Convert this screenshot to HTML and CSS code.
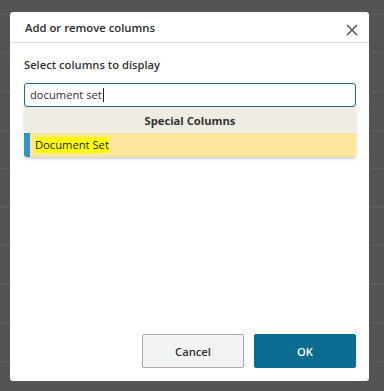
FILE: index.html
```html
<!DOCTYPE html>
<html>
<head>
<meta charset="utf-8">
<link rel="stylesheet" href="styles.css">
</head>
<body>
<div class="dialog">
  <div class="dialog-header">
    <span class="dialog-title">Add or remove columns</span>
    <span class="close">
      <svg width="12" height="12" viewBox="0 0 12 12"><path d="M1 1 L11 11 M11 1 L1 11" stroke="#5a5a5a" stroke-width="1.6" fill="none"/></svg>
    </span>
  </div>
  <div class="dialog-body">
    <div class="label">Select columns to display</div>
    <div class="input">document set<span class="caret"></span></div>
    <div class="dropdown">
      <div class="group">Special Columns</div>
      <div class="option"><span class="mark">Document Set</span></div>
    </div>
  </div>
  <div class="dialog-footer">
    <button class="btn btn-cancel">Cancel</button>
    <button class="btn btn-ok">OK</button>
  </div>
</div>
</body>
</html>
```
FILE: styles.css
```css
html, body {
  margin: 0;
  padding: 0;
}
body {
  width: 384px;
  height: 391px;
  overflow: hidden;
  background-color: #535553;
  background-image: repeating-linear-gradient(to bottom, transparent 0, transparent 14px, #5c5e5c 14px, #5c5e5c 15px, transparent 15px, transparent 38.5px);
  font-family: "Open Sans", "Noto Sans", sans-serif;
  color: #333;
  padding-top: 12px;
  box-sizing: border-box;
}
.dialog {
  margin-left: 10px;
  width: 359px;
  height: 369px;
  background: #fff;
  border-radius: 3px;
  display: flex;
  flex-direction: column;
  box-sizing: border-box;
}
.dialog-header {
  height: 31px;
  border-bottom: 1px solid #dcdcdc;
  display: flex;
  align-items: center;
  justify-content: space-between;
  padding: 0 11px 0 15px;
  box-sizing: border-box;
}
.dialog-title {
  font-size: 11.3px;
  font-weight: 600;
  color: #2b2b2b;
  margin-top: 1px;
}
.close {
  display: flex;
  margin-top: 5px;
}
.dialog-body {
  flex: 1;
  padding: 14px 13px 0 14px;
}
.label {
  font-size: 11.2px;
  font-weight: 600;
  line-height: 16px;
  color: #333;
  margin-bottom: 10px;
}
.input {
  height: 24px;
  border: 1px solid #1c6b8e;
  border-radius: 3px;
  box-sizing: border-box;
  padding: 0 5px;
  font-size: 11.2px;
  line-height: 22px;
  color: #333;
  display: flex;
  align-items: center;
}
.caret {
  display: inline-block;
  width: 1px;
  height: 14px;
  background: #222;
  margin-left: 1px;
}
.dropdown {
  box-shadow: 0 2px 3px rgba(0, 0, 0, 0.18);
  border-radius: 0 0 3px 3px;
  overflow: hidden;
}
.group {
  height: 26px;
  background: #efede3;
  font-size: 11.2px;
  font-weight: 700;
  color: #333;
  display: flex;
  align-items: center;
  justify-content: center;
}
.option {
  height: 24px;
  background: #ffe59c;
  border-left: 6px solid #3195bd;
  padding-left: 5px;
  display: flex;
  align-items: center;
  font-size: 11.2px;
  color: #222;
}
.mark {
  background: #ffff00;
  line-height: 16px;
}
.dialog-footer {
  display: flex;
  justify-content: flex-end;
  gap: 10px;
  padding: 0 13px 13px 0;
}
.btn {
  width: 102px;
  height: 34px;
  font-family: "Open Sans", "Noto Sans", sans-serif;
  font-size: 11.2px;
  font-weight: 600;
  border-radius: 2px;
  box-sizing: border-box;
  cursor: pointer;
}
.btn-cancel {
  background: #f2f3f3;
  border: 1px solid #a9abab;
  color: #333;
}
.btn-ok {
  background: #0b6c91;
  border: 1px solid #0b6c91;
  color: #fff;
}
```
